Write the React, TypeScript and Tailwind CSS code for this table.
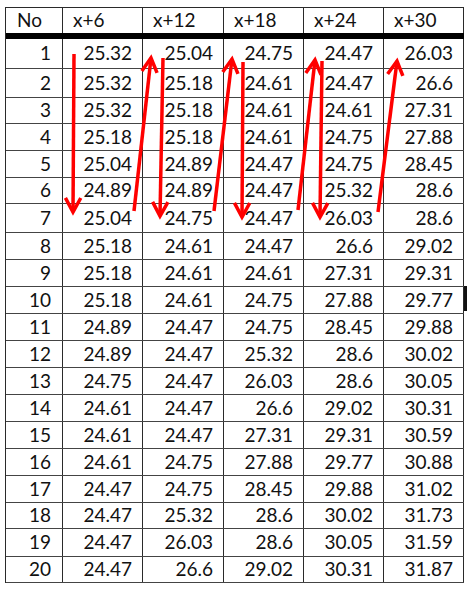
const header = ["No", "x+6", "x+12", "x+18", "x+24", "x+30"];

const widths = ["w-[57px]", "w-[80px]", "w-[81px]", "w-[80px]", "w-[80px]", "w-[80px]"];

// row heights follow the screenshot, which is a little unevenly scaled
const rows: { h: string; v: string[] }[] = [
  { h: "h-[30px]", v: ["1", "25.32", "25.04", "24.75", "24.47", "26.03"] },
  { h: "h-[29px]", v: ["2", "25.32", "25.18", "24.61", "24.47", "26.6"] },
  { h: "h-[26px]", v: ["3", "25.32", "25.18", "24.61", "24.61", "27.31"] },
  { h: "h-[27px]", v: ["4", "25.18", "25.18", "24.61", "24.75", "27.88"] },
  { h: "h-[27px]", v: ["5", "25.04", "24.89", "24.47", "24.75", "28.45"] },
  { h: "h-[26px]", v: ["6", "24.89", "24.89", "24.47", "25.32", "28.6"] },
  { h: "h-[29px]", v: ["7", "25.04", "24.75", "24.47", "26.03", "28.6"] },
  { h: "h-[27px]", v: ["8", "25.18", "24.61", "24.47", "26.6", "29.02"] },
  { h: "h-[27px]", v: ["9", "25.18", "24.61", "24.61", "27.31", "29.31"] },
  { h: "h-[27px]", v: ["10", "25.18", "24.61", "24.75", "27.88", "29.77"] },
  { h: "h-[27px]", v: ["11", "24.89", "24.47", "24.75", "28.45", "29.88"] },
  { h: "h-[27px]", v: ["12", "24.89", "24.47", "25.32", "28.6", "30.02"] },
  { h: "h-[27px]", v: ["13", "24.75", "24.47", "26.03", "28.6", "30.05"] },
  { h: "h-[27px]", v: ["14", "24.61", "24.47", "26.6", "29.02", "30.31"] },
  { h: "h-[27px]", v: ["15", "24.61", "24.47", "27.31", "29.31", "30.59"] },
  { h: "h-[27px]", v: ["16", "24.61", "24.75", "27.88", "29.77", "30.88"] },
  { h: "h-[27px]", v: ["17", "24.47", "24.75", "28.45", "29.88", "31.02"] },
  { h: "h-[26px]", v: ["18", "24.47", "25.32", "28.6", "30.02", "31.73"] },
  { h: "h-[28px]", v: ["19", "24.47", "26.03", "28.6", "30.05", "31.59"] },
  { h: "h-[26px]", v: ["20", "24.47", "26.6", "29.02", "30.31", "31.87"] },
];

type Seg = [number, number, number, number];

const arrows: Seg[] = [
  [74, 54, 73, 212],
  [134, 211, 151, 58],
  [163, 58, 160, 216],
  [214, 211, 232, 59],
  [243, 62, 242, 217],
  [298, 210, 315, 60],
  [322, 61, 320, 217],
  [378, 212, 397, 61],
];

function Arrow({ s }: { s: Seg }) {
  const [x1, y1, x2, y2] = s;
  const len = Math.hypot(x2 - x1, y2 - y1);
  const ux = (x2 - x1) / len;
  const uy = (y2 - y1) / len;
  const L = 16;
  const a = 0.5;
  const wing = (sign: number) => {
    const c = Math.cos(sign * a);
    const sn = Math.sin(sign * a);
    const rx = ux * c - uy * sn;
    const ry = ux * sn + uy * c;
    return `${x2 - L * rx},${y2 - L * ry}`;
  };
  return (
    <g>
      <line x1={x1} y1={y1} x2={x2} y2={y2} />
      <polyline points={`${wing(1)} ${x2},${y2} ${wing(-1)}`} fill="none" />
    </g>
  );
}

export default function App() {
  return (
    <div className="relative w-[474px] h-[594px] bg-white overflow-hidden">
      <div className="pl-[5px] pt-[7px]">
        <div
          className="w-[459px] border-l border-t border-[#2a2a2a] text-[19px] text-[#111]"
          style={{ fontFamily: "Lato, 'Open Sans', sans-serif" }}
        >
          <div className="flex h-[31px] border-b-[6px] border-black">
            {header.map((t, i) => (
              <div
                key={t}
                className={`${widths[i]} flex items-center border-r border-[#2a2a2a] ${i === 0 ? "pl-[11px]" : "pl-[10px]"}`}
              >
                {t}
              </div>
            ))}
          </div>
          {rows.map((r) => (
            <div key={r.v[0]} className={`flex ${r.h} border-b border-[#444]`}>
              {r.v.map((t, i) => (
                <div
                  key={i}
                  className={`${widths[i]} flex items-center justify-end border-r border-[#2a2a2a] ${i === 0 ? "pr-[11px]" : "pr-[10px]"}`}
                >
                  {t}
                </div>
              ))}
            </div>
          ))}
        </div>
      </div>

      <div className="absolute left-[464px] top-[286px] w-[3px] h-[25px] bg-[#111]" />

      <svg
        className="absolute left-0 top-0 pointer-events-none"
        width="474"
        height="594"
        stroke="#ff0000"
        strokeWidth="3.5"
        strokeLinecap="butt"
        strokeLinejoin="miter"
      >
        {arrows.map((s, i) => (
          <Arrow key={i} s={s} />
        ))}
      </svg>
    </div>
  );
}
